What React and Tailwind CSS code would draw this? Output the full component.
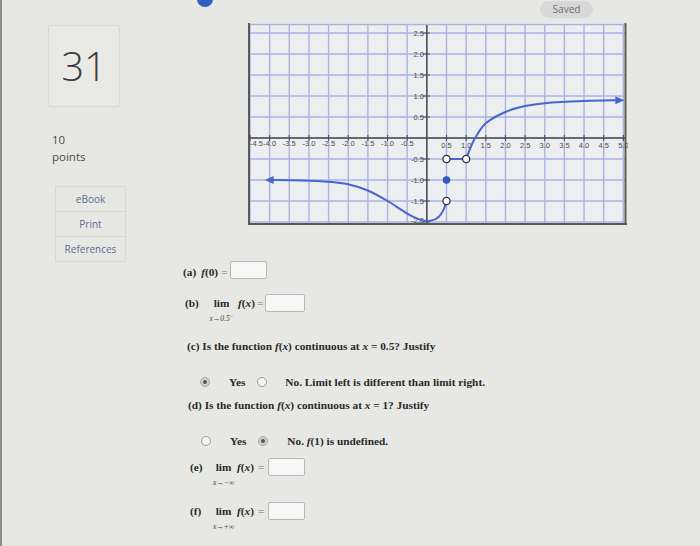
import clsx from "clsx";

const serif = { fontFamily: '"Liberation Serif", "Times New Roman", serif' };

const X0 = -4.5;
const SX = 39.3;
const px = (x) => 2 + (x - X0) * SX;
const py = (y) => 10 + (2.5 - y) * 42;

function smoothPath(points) {
  const p = points.map(([x, y]) => [px(x), py(y)]);
  let d = `M ${p[0][0]} ${p[0][1]}`;
  for (let i = 0; i < p.length - 1; i++) {
    const p0 = p[i - 1] || p[i];
    const p1 = p[i];
    const p2 = p[i + 1];
    const p3 = p[i + 2] || p2;
    const c1x = p1[0] + (p2[0] - p0[0]) / 6;
    const c1y = p1[1] + (p2[1] - p0[1]) / 6;
    const c2x = p2[0] - (p3[0] - p1[0]) / 6;
    const c2y = p2[1] - (p3[1] - p1[1]) / 6;
    d += ` C ${c1x} ${c1y} ${c2x} ${c2y} ${p2[0]} ${p2[1]}`;
  }
  return d;
}

const leftCurve = [
  [-4, -1.0],
  [-3.2, -1.01],
  [-2.5, -1.04],
  [-2, -1.1],
  [-1.5, -1.25],
  [-1, -1.5],
  [-0.5, -1.8],
  [-0.15, -1.95],
  [0.1, -1.97],
  [0.3, -1.88],
  [0.43, -1.7],
  [0.5, -1.5]
];

const rightCurve = [
  [1, -0.5],
  [1.2, -0.05],
  [1.5, 0.35],
  [2, 0.62],
  [2.5, 0.76],
  [3, 0.83],
  [4, 0.88],
  [4.9, 0.9]
];

const xs = [];
for (let v = -4.5; v <= 5.001; v += 0.5) xs.push(Math.round(v * 10) / 10);
const ys = [];
for (let v = -2; v <= 2.501; v += 0.5) ys.push(Math.round(v * 10) / 10);

function Graph() {
  const ax = px(0);
  const ay = py(0);
  return (
    <svg width="380" height="203" viewBox="0 0 380 203" className="block">
      <rect x="0" y="0" width="379" height="202" fill="#eceeef" />
      {xs.map((v) => (
        <line key={`vx${v}`} x1={px(v)} y1="1" x2={px(v)} y2="201" stroke="#aab3e4" strokeWidth="1.4" />
      ))}
      {ys.map((v) => (
        <line key={`hy${v}`} x1="1" y1={py(v)} x2="378" y2={py(v)} stroke="#aab3e4" strokeWidth="1.4" />
      ))}
      <line x1="1" y1="1.5" x2="378" y2="1.5" stroke="#aab3e4" strokeWidth="1.4" />
      {/* frame */}
      <line x1="1" y1="0" x2="1" y2="202" stroke="#5a5a5a" strokeWidth="2" />
      <line x1="377.5" y1="0" x2="377.5" y2="202" stroke="#5a5a5a" strokeWidth="2" />
      <line x1="0" y1="201" x2="379" y2="201" stroke="#5a5a5a" strokeWidth="2" />
      {/* axes */}
      <line x1="1" y1={ay} x2="378" y2={ay} stroke="#4d4d4d" strokeWidth="1.5" />
      <line x1={ax} y1="2" x2={ax} y2="201" stroke="#4d4d4d" strokeWidth="1.5" />
      {/* y labels */}
      {ys
        .filter((v) => v !== 0)
        .map((v) => (
          <g key={`ly${v}`}>
            <line x1={ax - 4} y1={py(v)} x2={ax + 3} y2={py(v)} stroke="#4d4d4d" strokeWidth="1" />
            <text
              x={ax - 3}
              y={v === -2 ? py(v) + 1 : py(v) + 2.5}
              textAnchor="end"
              fontSize="7.5"
              fill="#4a4a4a"
              fontFamily="Liberation Sans, Arial, sans-serif"
            >
              {v.toFixed(1)}
            </text>
          </g>
        ))}
      {/* x labels */}
      {xs
        .filter((v) => v !== 0)
        .map((v) => (
          <g key={`lx${v}`}>
            <line x1={px(v)} y1={ay - 3} x2={px(v)} y2={ay + 3} stroke="#4d4d4d" strokeWidth="1" />
            <text
              x={v === -4.5 ? 2 : px(v)}
              y={v < 0 ? ay + 8 : ay + 10}
              textAnchor={v === -4.5 ? "start" : "middle"}
              fontSize="7.5"
              fill="#4a4a4a"
              fontFamily="Liberation Sans, Arial, sans-serif"
            >
              {v.toFixed(1)}
            </text>
          </g>
        ))}
      {/* curves */}
      <path d={smoothPath(leftCurve)} fill="none" stroke="#4766cf" strokeWidth="2" />
      <path d={smoothPath(rightCurve)} fill="none" stroke="#4766cf" strokeWidth="2" />
      <line x1={px(0.5)} y1={py(-0.5)} x2={px(1)} y2={py(-0.5)} stroke="#4766cf" strokeWidth="2" />
      {/* arrows */}
      <polygon
        points={`${px(-4) - 5},${py(-1)} ${px(-4) + 4},${py(-1) - 4} ${px(-4) + 4},${py(-1) + 4}`}
        fill="#4766cf"
      />
      <polygon
        points={`${px(5) + 1},${py(0.9)} ${px(5) - 8},${py(0.9) - 4} ${px(5) - 8},${py(0.9) + 4}`}
        fill="#4766cf"
      />
      {/* points */}
      <circle cx={px(0.5)} cy={py(-0.5)} r="3.6" fill="#ffffff" stroke="#333" strokeWidth="1.3" />
      <circle cx={px(1)} cy={py(-0.5)} r="3.6" fill="#ffffff" stroke="#333" strokeWidth="1.3" />
      <circle cx={px(0.5)} cy={py(-1.5)} r="3.6" fill="#ffffff" stroke="#333" strokeWidth="1.3" />
      <circle cx={px(0.5)} cy={py(-1)} r="3.8" fill="#3656c4" />
    </svg>
  );
}

function Radio({ checked }) {
  return (
    <span
      className={clsx(
        "flex h-[10px] w-[10px] shrink-0 items-center justify-center rounded-full border",
        checked ? "border-[#a8a8a8] bg-[#cfcfcf]" : "border-[#9c9c9c] bg-[#f6f6f6]"
      )}
    >
      {checked ? <span className="h-[4px] w-[4px] rounded-full bg-[#555]" /> : null}
    </span>
  );
}

function AnswerBox({ w = "w-[37px]" }) {
  return <span className={clsx("inline-block h-[18px] rounded-[2px] border border-[#b9b9b9] bg-[#f7f7f7]", w)} />;
}

function Lim({ label, sub, labelW, fxGap, eqGap, boxW }) {
  return (
    <div className="flex items-start text-[11.3px] font-bold text-[#2a2a2a]" style={serif}>
      <span className={clsx("leading-[18px]", labelW)}>{label}</span>
      <div className="flex w-[19px] flex-col items-center">
        <span className="leading-[18px]">lim</span>
        <span className="mt-[2px] whitespace-nowrap text-[7.5px] font-normal italic leading-[9px] text-[#444]">
          {sub}
        </span>
      </div>
      <span className={clsx("leading-[18px]", fxGap)}>
        <i>f</i>(<i>x</i>)
      </span>
      <span className={clsx("leading-[18px] font-normal text-[#777]", eqGap)}>=</span>
      <span className={eqGap}>
        <AnswerBox w={boxW} />
      </span>
    </div>
  );
}

export default function App() {
  return (
    <div className="flex h-[546px] w-[700px] overflow-hidden bg-[#e7e8e3]">
      <div className="w-[2px] shrink-0 bg-[#8a8a8a]" />
      <div className="flex flex-1 flex-col">
        <header className="relative flex h-[22px] shrink-0 items-start justify-end pr-[107px]">
          <span className="absolute left-[195px] top-[-9px] h-[16px] w-[16px] rounded-full bg-[#2f5ec2]" />
          <span
            className="mt-[1px] flex h-[17px] w-[53px] items-center justify-center rounded-full bg-[#d8d8d6] text-[10px] text-[#6c6f80]"
            style={{ fontFamily: '"Open Sans", "Liberation Sans", sans-serif' }}
          >
            Saved
          </span>
        </header>

        <div className="flex flex-1">
          <aside
            className="flex w-[128px] shrink-0 flex-col"
            style={{ fontFamily: '"Open Sans", "Liberation Sans", sans-serif' }}
          >
            <div className="ml-[46px] mt-[3px] flex h-[82px] w-[72px] items-center justify-center rounded-[2px] border border-[#dadad5] bg-[#e9eae6]">
              <span className="text-[40px] font-light leading-none text-[#3a3a3a]">31</span>
            </div>
            <div className="ml-[50px] mt-[24px] text-[11.5px] leading-[17px] text-[#4a4a4a]">
              <div>10</div>
              <div>points</div>
            </div>
            <div className="ml-[53px] mt-[21px] flex w-[71px] flex-col text-[10px] text-[#5d6b95]">
              <div className="flex h-[26px] items-center justify-center border border-[#d8d9d4]">eBook</div>
              <div className="flex h-[25px] items-center justify-center border border-t-0 border-[#d8d9d4]">Print</div>
              <div className="flex h-[25px] items-center justify-center border border-t-0 border-[#d8d9d4]">
                References
              </div>
            </div>
          </aside>

          <main className="flex flex-1 flex-col">
            <div className="ml-[118px] mt-[1px]">
              <Graph />
            </div>

            <div className="mt-[35px] flex flex-col text-[11.3px] font-bold text-[#2a2a2a]" style={serif}>
              <div className="ml-[53px] flex items-center">
                <span>(a)</span>
                <span className="ml-[5px]">
                  <i>f</i>(0)
                </span>
                <span className="ml-[3px] font-normal text-[#777]">=</span>
                <span className="ml-[2px]">
                  <AnswerBox />
                </span>
              </div>

              <div className="ml-[55px] mt-[10px]">
                <Lim
                  label="(b)"
                  sub={<>x→0.5<sup>−</sup></>}
                  labelW="w-[27px]"
                  fxGap="ml-[7px]"
                  eqGap="ml-[2px]"
                  boxW="w-[40px]"
                />
              </div>

              <div className="ml-[57px] mt-[16px] leading-[14px]">
                (c) Is the function <i>f</i>(<i>x</i>) continuous at <i>x</i> = 0.5? Justify
              </div>

              <div className="ml-[70px] mt-[22px] flex items-center leading-[14px]">
                <Radio checked />
                <span className="ml-[19px]">Yes</span>
                <span className="ml-[12px]">
                  <Radio />
                </span>
                <span className="ml-[18px]">No. Limit left is different than limit right.</span>
              </div>

              <div className="ml-[58px] mt-[9px] leading-[14px]">
                (d) Is the function <i>f</i>(<i>x</i>) continuous at <i>x</i> = 1? Justify
              </div>

              <div className="ml-[71px] mt-[22px] flex items-center leading-[14px]">
                <Radio />
                <span className="ml-[19px]">Yes</span>
                <span className="ml-[12px]">
                  <Radio checked />
                </span>
                <span className="ml-[19px]">
                  No. <i>f</i>(1) is undefined.
                </span>
              </div>

              <div className="ml-[60px] mt-[10px]">
                <Lim
                  label="(e)"
                  sub="x→−∞"
                  labelW="w-[24px]"
                  fxGap="ml-[4px]"
                  eqGap="ml-[4px]"
                  boxW="w-[37px]"
                />
              </div>

              <div className="ml-[60px] mt-[15px]">
                <Lim
                  label="(f)"
                  sub="x→+∞"
                  labelW="w-[24px]"
                  fxGap="ml-[4px]"
                  eqGap="ml-[4px]"
                  boxW="w-[37px]"
                />
              </div>
            </div>
          </main>
        </div>
      </div>
    </div>
  );
}
